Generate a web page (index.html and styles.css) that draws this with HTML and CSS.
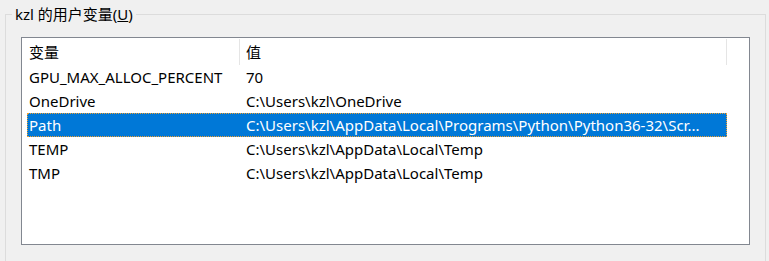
FILE: index.html
```html
<!DOCTYPE html>
<html>
	<head>
		<meta charset='utf-8' />
		<title>用户变量</title>
		<link rel="stylesheet" href="styles.css">
	</head>
	<body>

		<fieldset class="group">
			<legend class="group-title">kzl 的用户变量(<u>U</u>)</legend>
			<div class="listview">
				<div class="lv-header">
					<div class="lv-col lv-name">变量</div>
					<div class="lv-col lv-value">值</div>
				</div>
				<div class="lv-row">
					<div class="lv-col lv-name">GPU_MAX_ALLOC_PERCENT</div>
					<div class="lv-col lv-value">70</div>
				</div>
				<div class="lv-row">
					<div class="lv-col lv-name">OneDrive</div>
					<div class="lv-col lv-value">C:\Users\kzl\OneDrive</div>
				</div>
				<div class="lv-row selected">
					<div class="lv-col lv-name">Path</div>
					<div class="lv-col lv-value">C:\Users\kzl\AppData\Local\Programs\Python\Python36-32\Scr...</div>
				</div>
				<div class="lv-row">
					<div class="lv-col lv-name">TEMP</div>
					<div class="lv-col lv-value">C:\Users\kzl\AppData\Local\Temp</div>
				</div>
				<div class="lv-row">
					<div class="lv-col lv-name">TMP</div>
					<div class="lv-col lv-value">C:\Users\kzl\AppData\Local\Temp</div>
				</div>
			</div>
		</fieldset>

	</body>
</html>
```

FILE: styles.css
```css
body{
	margin:0;
	background-color:#f0f0f0;
	font: normal 15px "Noto Sans", "Noto Sans CJK SC", sans-serif;
	color:#000;
	overflow:hidden;
}
.group{
	margin:0 0 0 5px;
	width:761px;
	box-sizing:border-box;
	border:1px solid #dcdcdc;
	padding:9px 15px 40px 15px;
}
.group-title{
	margin-left:-9px;
	padding:0 3px;
	line-height:28px;
}
.listview{
	width:729px;
	height:208px;
	box-sizing:border-box;
	border:1px solid #828790;
	background-color:#fff;
}
.lv-header{
	display:flex;
	height:27px;
	padding-left:5px;
	align-items:flex-start;
}
.lv-header .lv-col{
	margin-top:1px;
	height:26px;
	line-height:26px;
	border-right:1px solid #e5e5e5;
}
.lv-row{
	display:flex;
	width:700px;
	height:24px;
	line-height:24px;
	margin-left:5px;
	box-sizing:border-box;
}
.lv-col{
	box-sizing:border-box;
	white-space:nowrap;
	overflow:hidden;
}
.lv-name{
	width:213px;
	padding-left:2px;
}
.lv-value{
	width:487px;
	padding-left:6px;
}
.lv-row.selected{
	background-color:#0078d7;
	color:#fff;
	outline:1px dotted #f0a030;
	outline-offset:-1px;
}
```
